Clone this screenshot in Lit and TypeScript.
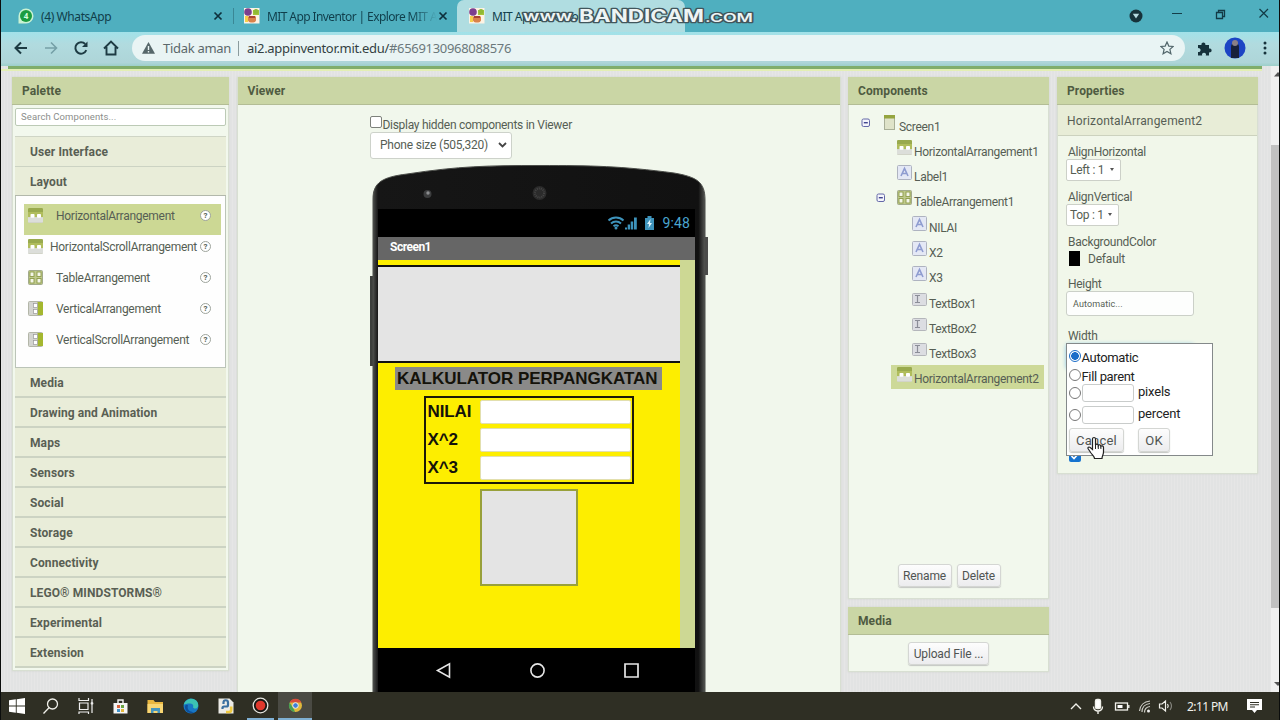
import { LitElement, html, css, svg, nothing } from "lit";
import { customElement, property } from "lit/decorators.js";
import { classMap } from "lit/directives/class-map.js";

const glyphs: Record<string, any> = {
  horizontal: svg`<path d="M1 2.500h13a1 1 0 0 1 1 1V14a1 1 0 0 1-1 1H1a1 1 0 0 1-1-1V3.500z" fill="#d2d4c9"/><path d="M1 0h13l1 1v8H0V1z" fill="#b0bd5c"/><path d="M1 0h13l1 1v3H0V1z" fill="#99aa4e"/><path d="M0 9.500h15V14H0z" fill="#dcdeda"/><rect x="2.500" y="6" width="4" height="3.800" rx=".8" fill="#fff"/><rect x="9" y="6" width="4" height="3.800" rx=".8" fill="#fff"/>`,
  table: svg`<rect x=".5" y=".5" width="14" height="14" rx="1" fill="#bfc98d" stroke="#a2aa8c"/><g fill="#f4f6ea" stroke="#8d9c48" stroke-width=".9"><rect x="2" y="2" width="4" height="4.500"/><rect x="9" y="2" width="4" height="4.500"/><rect x="2" y="8.500" width="4" height="4.500"/><rect x="9" y="8.500" width="4" height="4.500"/></g>`,
  vertical: svg`<rect x=".5" y=".5" width="14" height="14" rx="1" fill="#d3d4cf" stroke="#b3b6a8"/><path d="M9.500 1H15v13H9.500z" fill="#a4b72f"/><rect x="5.500" y="2.500" width="4" height="4" fill="#fff" stroke="#999" stroke-width=".7"/><rect x="5.500" y="8.500" width="4" height="4" fill="#fff" stroke="#999" stroke-width=".7"/>`,
  label: svg`<rect x=".5" y=".5" width="14" height="14" rx="1" fill="#e4e8f5" stroke="#aeb3c0"/><path d="M4 11 7.500 3.500 11 11M5.300 8.500h4.400" fill="none" stroke="#8e9cd0" stroke-width="1.600"/>`,
  textbox: svg`<rect x=".5" y="1.500" width="14" height="12" rx="1" fill="#dcdde2" stroke="#b4b6bb"/><path d="M3 3.500h5M5.500 3.500v7M3 10.500h5" fill="none" stroke="#8c8e98" stroke-width="1.200"/>`,
  screen: svg`<rect x="2.500" y=".5" width="10" height="14" fill="#dfe3c9" stroke="#a9af97"/><path d="M2 0h11v3.500H2z" fill="#95a53f"/>`,
};

const sprite = (name: string) => html`<svg class="sprite" width="15" height="15" viewBox="0 0 15 15">${glyphs[name]}</svg>`;

const inventorLogo = html`<svg width="16" height="16" viewBox="0 0 16 16"><path d="M0 0h15.500v15.500H0z" fill="#fdf3e4"/><circle cx="4" cy="4" r="3.800" fill="#7c3f8e"/><path d="M9 2h6v5H9z" fill="#a3c53a"/><circle cx="12" cy="3.500" r="2.500" fill="#8fb935"/><path d="M1 8h3v6H1z" fill="#f6cf4a"/><path d="M4 8.500h8v4a3 3 0 0 1-3 2H7a3 3 0 0 1-3-2z" fill="#d9824a"/><path d="M5 8h6v2H5z" fill="#a94433"/></svg>`;

@customElement("browser-chrome")
export class BrowserChrome extends LitElement {
  static styles = css`
    :host { display: block; font-family: "Noto Sans", "Open Sans", sans-serif; }
    .tabs { height: 32px; background: #4fafbf; display: flex; align-items: center; font-size: 12px; color: #103e4b; }
    .tab { display: flex; align-items: center; height: 32px; box-sizing: border-box; white-space: nowrap; }
    .tab svg { flex: none; }
    .wa { width: 232px; padding: 0 9px 0 17px; }
    .wa span { flex: 1; margin-left: 7px; letter-spacing: -.4px; }
    .sep { width: 1px; height: 16px; background: #3a8795; }
    .second { width: 223px; padding: 0 8px 0 10px; }
    .second span { margin: 0 auto 0 7px; letter-spacing: -.6px; mask-image: linear-gradient(90deg, #000 85%, transparent); }
    .active { width: 228px; background: #b0dde1; border-radius: 7px 7px 0 0; padding-left: 12px; }
    .active span { margin-left: 7px; letter-spacing: -.5px; }
    .winctl { margin-left: auto; display: flex; align-items: center; padding-right: 9px; }
    .bar { height: 34px; box-sizing: border-box; display: flex; align-items: center; background: linear-gradient(#a1e2e9, #b1dbdf 35%, #aed5d8 90%, #9ccfc9); padding: 0 7px 2px 11px; }
    .nav { width: 121px; display: flex; gap: 12px; align-items: center; }
    .nav svg { width: 18px; height: 18px; }
    .omni { width: 1053px; height: 26px; border-radius: 13px; background: #e9f4f4; display: flex; align-items: center; padding: 0 11px 0 10px; box-sizing: border-box; font-size: 13px; color: #333f42; margin-left: -1px; white-space: nowrap; }
    .warn { margin-left: 8px; width: 68px; color: #5b686b; letter-spacing: -.3px; }
    .rule { width: 1px; height: 15px; background: #8b9b9d; margin: 0 8px 0 7px; }
    .path { color: #6b787b; }
    .url { letter-spacing: -.31px; }
    .star { margin-left: auto; }
    .tools { display: flex; align-items: center; margin-left: 12px; gap: 12px; }
  `;
  render() {
    const close = html`<svg width="12" height="12" viewBox="0 0 12 12"><path d="M2.500 2.500l7 7m0-7l-7 7" stroke="#0d303c" stroke-width="1.700"/></svg>`;
    return html`
      <div class="tabs">
        <div class="tab wa">
          <svg width="16" height="16" viewBox="0 0 16 16"><path d="M.5 15.500V8A7.500 7.500 0 1 1 8 15.500z" fill="#c9f2d4"/><circle cx="8" cy="8" r="6" fill="#1c9c41"/><text x="8" y="11" text-anchor="middle" font-size="8" font-weight="700" fill="#d5ffe0">4</text></svg>
          <span>(4) WhatsApp</span>${close}
        </div>
        <div class="sep"></div>
        <div class="tab second">${inventorLogo}<span>MIT App Inventor | Explore MIT A</span>${close}</div>
        <div class="tab active">${inventorLogo}<span>MIT App Inventor</span></div>
        <div class="winctl">
          <svg width="142" height="20" viewBox="0 0 142 20"><circle cx="8" cy="10" r="6.500" fill="#17323a"/><path d="M4.800 7.800h6.400L8 12.500z" fill="#b6d9df"/><path d="M44 7.500h10" stroke="#143e49"/><path d="M88.500 6.500h6v6h-6zM90.500 6.500v-2h6v6h-2" fill="none" stroke="#123a45" stroke-width="1.300"/><path d="M131.500 3l8.500 8.500m0-8.500l-8.500 8.500" stroke="#123a45" stroke-width="1.200"/></svg>
        </div>
      </div>
      <div class="bar">
        <div class="nav">
          <svg viewBox="0 0 18 18" fill="none" stroke="#1d3b43" stroke-width="2"><path d="M15 9H3.500M9 3.500 3.500 9 9 14.500"/></svg>
          <svg viewBox="0 0 18 18" fill="none" stroke="#75a0a7" stroke-width="1.600"><path d="M3 9h11.500M9 3.500l5.500 5.500L9 14.500"/></svg>
          <svg viewBox="0 0 18 18"><path d="M14.300 11.200A5.700 5.700 0 1 1 13.200 5" fill="none" stroke="#1d3b43" stroke-width="2"/><path d="M15.500 2.500V8H10z" fill="#1d3b43"/></svg>
          <svg viewBox="0 0 18 18"><path d="M2 9.500 9 2.500l7 7M4.500 8v7.500h9V8" fill="none" stroke="#1d3b43" stroke-width="1.900"/></svg>
        </div>
        <div class="omni">
          <svg width="13" height="12" viewBox="0 0 13 12"><path d="M6.500 0 13 11.800H0z" fill="#56676a"/><path d="M6.500 4v4M6.500 9v1.500" stroke="#e9f4f4" stroke-width="1.400"/></svg>
          <span class="warn">Tidak aman</span><span class="rule"></span>
          <span class="url">ai2.appinventor.mit.edu/<span class="path">#6569130968088576</span></span>
          <svg class="star" width="14" height="14" viewBox="0 0 14 14"><path d="M7 1l1.800 4.100 4.400.4-3.300 2.900 1 4.400L7 10.500l-3.900 2.300 1-4.400L.8 5.500l4.400-.4z" fill="none" stroke="#52666b" stroke-width="1.200"/></svg>
        </div>
        <div class="tools">
          <svg width="15" height="15" viewBox="0 0 15 15"><path d="M1 4h3.500a2 2 0 1 1 3.800 0H12v3.500a2 2 0 1 1 0 3.800V14.500H8.800a2 2 0 1 0-3.600 0H1V11a2 2 0 1 0 0-3.800z" fill="#16323b"/></svg>
          <svg width="22" height="22" viewBox="0 0 22 22"><circle cx="11" cy="11" r="10.500" fill="#1c44c4"/><path d="M7 21V10a4 4 0 0 1 8 0v11z" fill="#17203a"/><circle cx="11" cy="6" r="3" fill="#8a7f86"/></svg>
          <svg width="14" height="16" viewBox="0 0 14 16" fill="#16323b"><circle cx="7" cy="3" r="1.500"/><circle cx="7" cy="8" r="1.500"/><circle cx="7" cy="13" r="1.500"/></svg>
        </div>
      </div>`;
  }
}

const panelStyles = css`
  :host { display: block; font-family: Roboto, sans-serif; font-size: 12px; color: #565e54; white-space: nowrap; }
  .panel { background: #f2f8ed; box-sizing: border-box; border: 1px solid #d8dfd2; border-top: 0; box-shadow: 0 0 2px #cfd3cd; }
  .head { height: 28px; line-height: 28px; box-sizing: border-box; margin: 0 -1px; background: #cad6a5; border-bottom: 1px solid #b3bd95; padding-left: 10px; font-weight: 700; font-size: 12px; letter-spacing: .1px; color: #4f5b41; }
  .btn { display: inline-flex; align-items: center; justify-content: center; box-sizing: border-box; background: linear-gradient(#fdfdfd, #ececee); border: 1px solid #d4d6d3; border-radius: 3px; box-shadow: 0 1px 1px #c4c6c3; color: #505452; }
  .sprite { flex: none; display: block; }
`;

@customElement("palette-panel")
export class PalettePanel extends LitElement {
  static styles = [panelStyles, css`
    .panel { width: 217px; height: 594px; padding: 0; }
    .search { margin: 3px 2px 10px; height: 18px; line-height: 16px; box-sizing: border-box; background: #fff; border: 1px solid #bccab6; border-radius: 2px; padding-left: 5px; font-size: 9.500px; color: #8b8e8b; letter-spacing: .1px; }
    .stack { margin: 0 2px; border-top: 1px solid #cfd5c6; }
    .cat { height: 30px; line-height: 30px; box-sizing: border-box; background: #e9edd9; border-bottom: 2px solid #ccd3c3; padding-left: 15px; font-weight: 700; font-size: 12px; letter-spacing: .1px; color: #595f54; }
    .cat.top { line-height: 31px; border-bottom-width: 1px; }
    .cat.open { border-bottom: 1px solid #b2b8ab; height: 29px; line-height: 31px; }
    .items { height: 172px; box-sizing: border-box; padding: 8px 4px 0 8px; background: #fefefe; border: 1px solid #bbc4b8; border-top: 0; }
    .item { height: 30.900px; box-sizing: border-box; padding: 0 10px 7px 4px; display: flex; align-items: center; letter-spacing: -.28px; }
    .item .name { flex: 1; text-align: left; padding: 0 0 0 13px; }
    .item.wide .name { padding-left: 7px; }
    .picked { background: #ccd894; }
    .q { width: 9px; height: 9px; border: 1px solid #9ea49c; border-radius: 50%; background: #fff; font-size: 8px; font-weight: 700; line-height: 9px; text-align: center; letter-spacing: 0; }
  `];
  items = [["HorizontalArrangement", "horizontal"], ["HorizontalScrollArrangement", "horizontal"], ["TableArrangement", "table"], ["VerticalArrangement", "vertical"], ["VerticalScrollArrangement", "vertical"]];
  rest = ["Media", "Drawing and Animation", "Maps", "Sensors", "Social", "Storage", "Connectivity", "LEGO® MINDSTORMS®", "Experimental", "Extension"];
  render() {
    return html`<div class="panel">
      <div class="head">Palette</div>
      <div class="search">Search Components...</div>
      <div class="stack">
        <div class="cat top">User Interface</div>
        <div class="cat open">Layout</div>
        <div class="items">${this.items.map(([n, g], i) => html`
          <div class=${classMap({ item: true, picked: i === 0, wide: i === 1 })}>${sprite(g)}<span class="name">${n}</span><span class="q">?</span></div>`)}</div>
        ${this.rest.map((n) => html`<div class="cat">${n}</div>`)}
      </div>
    </div>`;
  }
}

@customElement("phone-mock")
export class PhoneMock extends LitElement {
  static styles = css`
    :host { display: block; }
    .phone { display: grid; width: 340px; height: 528px; overflow: hidden; }
    .phone > * { grid-area: 1 / 1; }
    .face { width: 317px; margin: 44px 0 0 9px; display: flex; flex-direction: column; z-index: 1; }
    .status { height: 28px; background: #000; display: flex; align-items: center; justify-content: flex-end; padding-right: 5px; color: #4ba6d0; font: 14px/30px "Roboto", sans-serif; letter-spacing: .15px; gap: 5px; }
    .title { height: 23px; background: #666; color: #fff; font: 700 12px/21px "Roboto", sans-serif; letter-spacing: -.5px; padding-left: 12px; }
    .body { display: flex; height: 388px; }
    .canvas { width: 302px; background: #fdee00; display: flex; flex-direction: column; align-items: center; padding-top: 5px; box-sizing: border-box; font-family: "Liberation Sans", Arial, sans-serif; font-weight: 700; color: #14120a; }
    .gutter { flex: 1; background: #cdd894; }
    .harr { width: 302px; height: 98px; box-sizing: border-box; background: #e4e4e4; border: solid #111; border-width: 2px 0; }
    .caption { width: 267px; height: 23px; margin: 4px 1px 0 0; background: #8a8a89; line-height: 24px; font-size: 17px; box-sizing: border-box; padding-left: 2px; letter-spacing: -.02px; }
    .table { width: 210px; height: 88px; box-sizing: border-box; border: 2px solid #1c1908; margin: 6px 1px 0 0; display: grid; grid-template: repeat(3, 28px) / 53px 151px; padding-left: 1px; font-size: 17px; align-items: center; }
    .table span { padding-left: 1px; white-space: nowrap; letter-spacing: -.1px; }
    .field { height: 24px; background: #fff; border: 1px solid #e2dfae; border-radius: 2px; box-sizing: border-box; }
    .square { width: 98px; height: 97px; box-sizing: border-box; margin-top: 5px; background: #e4e4e4; border: 2px solid #98a03a; }
    .keys { height: 45px; background: #000; display: flex; align-items: center; justify-content: center; gap: 77px; padding-left: 1px; }
  `;
  render() {
    return html`<div class="phone">
      <svg width="340" height="528" viewBox="0 0 340 528">
        <defs><linearGradient id="rim" x1="0" x2="1"><stop offset="0" stop-color="#4c4e4b"/><stop offset=".015" stop-color="#161616"/><stop offset=".98" stop-color="#111"/><stop offset="1" stop-color="#555753"/></linearGradient></defs>
        <path d="M1 111h5v90H1z" fill="#3c3f3c"/><path d="M334 72h5v38h-5z" fill="#4a4b49"/>
        <path d="M4 528V34C4 17 14 12 38 9 90 1 120 .5 171 .5S252 1 305 8c23 4 31 9 31 27v493z" fill="url(#rim)" stroke="#4b4d49" stroke-width="1"/>
        <circle cx="58.500" cy="29" r="4" fill="#3c3d3e"/><circle cx="59" cy="28" r="1.700" fill="#8b8d8f"/><circle cx="170.500" cy="28" r="7" fill="#2b2b2b"/><circle cx="170.500" cy="28" r="4.500" fill="none" stroke="#444" stroke-width="2" stroke-dasharray="1 1"/>
      </svg>
      <div class="face">
        <div class="status">
          <svg width="50" height="18" viewBox="0 0 50 18"><g fill="none" stroke="#3e93bb" stroke-width="2"><path d="M1.500 6.500a11 11 0 0 1 15 0M4 9.500a7.500 7.500 0 0 1 10 0M6.500 12.300a4 4 0 0 1 5 0"/></g><circle cx="9" cy="14" r="1.500" fill="#3e93bb"/><g fill="#3e93bb"><path d="M18 15.500v-2h2v2zM20.700 15.500v-5h2.300v5zM23.700 15.500V7.500h2.500v8zM27 15.500V3.500h2.800v12z"/><path d="M38 4h2.500V2h4v2H47v12h-9z"/></g><path d="M43.500 5 40 10h2l-.5 4 3.500-5h-2z" fill="#dff6ff"/></svg>
          <span>9:48</span>
        </div>
        <div class="title">Screen1</div>
        <div class="body">
          <div class="canvas">
            <div class="harr"></div>
            <div class="caption">KALKULATOR PERPANGKATAN</div>
            <div class="table">
              <span>NILAI</span><div class="field"></div>
              <span>X^2</span><div class="field"></div>
              <span>X^3</span><div class="field"></div>
            </div>
            <div class="square"></div>
          </div>
          <div class="gutter"></div>
        </div>
        <div class="keys">
          <svg width="17" height="17" viewBox="0 0 17 17"><path d="M14.500 1.800v13.400L2.500 8.500z" fill="none" stroke="#e6e6e6" stroke-width="1.600"/></svg>
          <svg width="17" height="17" viewBox="0 0 17 17"><circle cx="8.500" cy="8.500" r="6.600" fill="none" stroke="#e6e6e6" stroke-width="1.600"/></svg>
          <svg width="17" height="17" viewBox="0 0 17 17"><path d="M2 2h13v13H2z" fill="none" stroke="#e6e6e6" stroke-width="1.700"/></svg>
        </div>
      </div>
    </div>`;
  }
}

@customElement("viewer-panel")
export class ViewerPanel extends LitElement {
  static styles = [panelStyles, css`
    .panel { width: 604px; height: 615px; overflow: hidden; border-bottom: 0; background: #f1f7ec; }
    .head { padding-left: 10.500px; }
    .opts { padding: 10px 0 0 132px; }
    .check { display: flex; height: 17px; align-items: flex-start; line-height: 20px; letter-spacing: -.29px; }
    .check i { width: 12px; height: 12px; box-sizing: border-box; border: 1px solid #7d817b; border-radius: 2px; background: #fff; margin: 1px .5px 0 0; }
    .select { width: 142px; height: 27px; box-sizing: border-box; border: 1px solid #cdd2ca; border-radius: 3px; background: #fff; display: flex; align-items: center; justify-content: space-between; padding: 0 4px 1px 9px; letter-spacing: -.22px; }
    phone-mock { margin: 6px 0 0 131px; }
  `];
  render() {
    return html`<div class="panel">
      <div class="head">Viewer</div>
      <div class="opts">
        <div class="check"><i></i>Display hidden components in Viewer</div>
        <div class="select">Phone size (505,320)<svg width="9" height="6" viewBox="0 0 9 6"><path d="M1 1l3.500 3.500L8 1" fill="none" stroke="#444" stroke-width="1.800"/></svg></div>
      </div>
      <phone-mock></phone-mock>
    </div>`;
  }
}

type TreeNode = { name: string; kind: string; depth: number; fold?: boolean; picked?: boolean };

@customElement("components-panel")
export class ComponentsPanel extends LitElement {
  static styles = [panelStyles, css`
    .tree { width: 201px; height: 522px; display: flex; flex-direction: column; }
    .rows { padding-top: 7.500px; flex: 1; }
    .row { height: 25.300px; box-sizing: border-box; display: flex; align-items: flex-start; }
    .d0 { padding-left: 11.500px; }
    .d1 { padding-left: 32px; }
    .d2 { padding-left: 47px; }
    .fold { flex: none; width: 10px; padding-top: 5px; margin-right: 11.500px; }
    .d1 .fold { margin: 0 5.500px 0 -5.500px; }
    .hit { display: flex; height: 24px; box-sizing: border-box; padding: 2px 5px 0 6px; align-items: flex-start; }
    .hit span { line-height: 24px; margin-left: 2px; letter-spacing: -.3px; }
    .d0 .hit { padding-left: 0; }
    .picked { background: #cdd998; }
    .nofold { flex: none; width: 10px; }
    .acts { height: 34px; display: flex; justify-content: center; gap: 5px; padding-left: 1px; }
    .btn { height: 23px; font-size: 12px; letter-spacing: -.1px; }
    .rename { width: 54px; } .delete { width: 44px; } .upload { width: 81px; margin-top: 7px; letter-spacing: -.15px; }
    .media { width: 201px; height: 65px; margin-top: 8px; }
    .center { display: flex; justify-content: center; }
  `];
  nodes: TreeNode[] = [
    { name: "Screen1", kind: "screen", depth: 0, fold: true },
    { name: "HorizontalArrangement1", kind: "horizontal", depth: 1 },
    { name: "Label1", kind: "label", depth: 1 },
    { name: "TableArrangement1", kind: "table", depth: 1, fold: true },
    { name: "NILAI", kind: "label", depth: 2 },
    { name: "X2", kind: "label", depth: 2 },
    { name: "X3", kind: "label", depth: 2 },
    { name: "TextBox1", kind: "textbox", depth: 2 },
    { name: "TextBox2", kind: "textbox", depth: 2 },
    { name: "TextBox3", kind: "textbox", depth: 2 },
    { name: "HorizontalArrangement2", kind: "horizontal", depth: 1, picked: true },
  ];
  render() {
    return html`
      <div class="panel tree">
        <div class="head">Components</div>
        <div class="rows">${this.nodes.map((n) => html`
          <div class="row d${n.depth}">
            ${n.fold
              ? html`<svg class="fold" width="10" height="10" viewBox="0 0 10 10"><rect x="1" y="1" width="7.500" height="7.500" rx="1.500" fill="#f4f5fb" stroke="#6468a8"/><path d="M2.800 4.750h4" stroke="#22267c" stroke-width="1.200"/></svg>`
              : n.depth ? html`<span class="nofold"></span>` : nothing}
            <div class=${classMap({ hit: true, picked: !!n.picked })}>${sprite(n.kind)}<span>${n.name}</span></div>
          </div>`)}</div>
        <div class="acts"><span class="btn rename">Rename</span><span class="btn delete">Delete</span></div>
      </div>
      <div class="panel media">
        <div class="head">Media</div>
        <div class="center"><span class="btn upload">Upload File ...</span></div>
      </div>`;
  }
}

@customElement("size-popup")
export class SizePopup extends LitElement {
  static styles = [panelStyles, css`
    :host { font-size: 13px; color: #222; letter-spacing: -.35px; }
    .pop { width: 147px; height: 113px; box-sizing: border-box; border: 1px solid #84898a; background: #fff; padding: 4px 0 0 2px; }
    .line { display: flex; align-items: center; height: 19px; }
    .line.box { height: 22px; }
    .line.first { margin-top: -4px; }
    .dot { width: 12px; height: 12px; box-sizing: border-box; border: 1px solid #777; border-radius: 50%; background: #fff; flex: none; margin-right: .500px; }
    .on { border: 1.500px solid #1b6dc9; background: radial-gradient(#1b6dc9 50%, #fff 58%); }
    .num { width: 52px; height: 18px; box-sizing: border-box; border: 1px solid #c9cccb; border-radius: 3px; margin-right: 4.500px; }
    .unit { margin-top: -4px; letter-spacing: -.2px; }
    .lift { margin-top: -3px; }
    .btns { display: flex; gap: 14px; margin-top: 2px; }
    .btn { height: 24px; letter-spacing: .2px; }
    .cancel { width: 55px; } .ok { width: 32px; }
  `];
  render() {
    return html`<div class="pop">
      <div class="line"><i class="dot on lift"></i><span>Automatic</span></div>
      <div class="line"><i class="dot lift"></i><span>Fill parent</span></div>
      <div class="line box first"><i class="dot"></i><i class="num"></i><span class="unit">pixels</span></div>
      <div class="line box"><i class="dot"></i><i class="num"></i><span class="unit">percent</span></div>
      <div class="btns"><span class="btn cancel">Cancel</span><span class="btn ok">OK</span></div>
    </div>`;
  }
}

@customElement("properties-panel")
export class PropertiesPanel extends LitElement {
  static styles = [panelStyles, css`
    .panel { width: 201px; height: 397px; background: #f1f7ea; }
    .sub { height: 31px; line-height: 32px; box-sizing: border-box; background: #e8edd7; border-bottom: 1px solid #ccd2be; padding-left: 9px; letter-spacing: .18px; }
    .list { padding: 7px 0 0 8px; position: relative; }
    .lab { height: 16px; line-height: 18px; padding-left: 2px; letter-spacing: -.28px; }
    .lab.near { line-height: 16px; }
    .sel { display: flex; align-items: center; justify-content: space-between; box-sizing: border-box; width: 55px; height: 22px; background: #fff; border: 1px solid #ccd0c8; border-radius: 2px; padding: 0 6px 1px 3px; margin-bottom: 7px; letter-spacing: -.3px; }
    .sel.v { width: 53px; }
    .arrow { width: 0; border: 2px solid transparent; border-top: 3px solid #555; border-bottom: 0; }
    .color { display: flex; height: 18px; gap: 8px; align-items: center; padding-left: 3px; margin-bottom: 8px; letter-spacing: -.2px; }
    .color span { padding-top: 1px; }
    .sw { width: 11px; height: 15px; background: #000; }
    .inp { width: 128px; height: 25px; line-height: 24px; box-sizing: border-box; border: 1px solid #cbd0c8; border-radius: 3px; background: #fdfefd; padding-left: 6px; font-size: 9px; letter-spacing: .1px; margin-bottom: 12px; }
    .glow { border-color: #8cc6e4; box-shadow: 0 0 4px #8cc6e4; }
    .tick { display: block; margin: 81px 0 0 3px; }
    size-popup { position: absolute; left: 8px; top: 207px; }
  `];
  render() {
    const arrow = html`<i class="arrow"></i>`;
    return html`<div class="panel">
      <div class="head">Properties</div>
      <div class="sub">HorizontalArrangement2</div>
      <div class="list">
        <div class="lab">AlignHorizontal</div><div class="sel">Left : 1${arrow}</div>
        <div class="lab">AlignVertical</div><div class="sel v">Top : 1${arrow}</div>
        <div class="lab">BackgroundColor</div><div class="color"><i class="sw"></i><span>Default</span></div>
        <div class="lab">Height</div><div class="inp">Automatic...</div>
        <div class="lab near">Width</div><div class="inp glow"></div>
        <svg class="tick" width="12" height="12" viewBox="0 0 12 12"><rect width="12" height="12" rx="2" fill="#1673cf"/><path d="M2.500 6l2.500 2.500L9.500 3.500" fill="none" stroke="#fff" stroke-width="1.700"/></svg>
        <size-popup></size-popup>
      </div>
    </div>`;
  }
}

@customElement("task-bar")
export class TaskBar extends LitElement {
  static styles = css`
    :host { display: block; }
    .bar { height: 28px; background: #2f2f24; display: flex; align-items: center; font: 12px "Noto Sans", sans-serif; color: #f1f1ec; }
    .app { width: 35px; height: 28px; display: flex; align-items: center; justify-content: center; box-sizing: border-box; }
    .start { width: 32px; }
    .run { width: 27px; margin: 0 4px; border-bottom: 2px solid #7fb0d4; }
    .cur { width: 34px; margin: 0; background: #4a4a43; }
    .tray { margin-left: auto; display: flex; align-items: center; }
    .clock { width: 40px; margin: 0 20px 0 12px; letter-spacing: -.6px; white-space: nowrap; }
    .note { margin-right: 17px; }
  `;
  render() {
    return html`<div class="bar">
      <span class="app start"><svg width="16" height="16" viewBox="0 0 16 16" fill="#fff"><path d="M0 2.300 6.800 1.300v6.200H0zM7.700 1.200 16 0v7.500H7.700zM0 8.400h6.800v6.300L0 13.700zM7.700 8.400H16V16l-8.300-1.200z"/></svg></span>
      <span class="app"><svg width="17" height="17" viewBox="0 0 17 17" fill="none" stroke="#f0f0ea" stroke-width="1.300"><circle cx="10.500" cy="6" r="5"/><path d="M7 9.700 1.500 15.500"/></svg></span>
      <span class="app"><svg width="16" height="16" viewBox="0 0 16 16" fill="none" stroke="#eee" stroke-width="1.200"><path d="M1.500 5h8.500v6.500H1.500zM1 0v2.500h9.500V0M1 16v-2h9.500v2M14 1v3M14 7v8"/><circle cx="14" cy="5.500" r=".8" fill="#fff"/></svg></span>
      <span class="app"><svg width="15" height="16" viewBox="0 0 15 16"><path d="M.5 5h14v10.500H.5z" fill="#f5f5f5"/><path d="M5 5V2h5v3" fill="none" stroke="#f5f5f5" stroke-width="1.400"/><path d="M4 7h3v3H4z" fill="#d8633e"/><path d="M8 7h3v3H8z" fill="#6aa442"/><path d="M4 11h3v3H4z" fill="#4093cb"/><path d="M8 11h3v3H8z" fill="#e5b83c"/></svg></span>
      <span class="app"><svg width="17" height="15" viewBox="0 0 17 15"><path d="M.5 1h6l1.500 2h8v11H.5z" fill="#e9b740"/><path d="M.5 5h15.500v9H.5z" fill="#f8d673"/><path d="M4 9h9v5h-2.500v-2h-4v2H4z" fill="#4796bd"/></svg></span>
      <span class="app"><svg width="16" height="16" viewBox="0 0 16 16"><circle cx="8" cy="8" r="7.500" fill="#1877c4"/><path d="M.7 7C2 1.500 8-.8 12.500 2c3 2 3.500 6 1.500 8-1.500 1-4 .5-4-1 .8-1 0-3.500-3-3.500C4 5.500 1.500 6 .7 7z" fill="#3cc2b2"/><path d="M5 7.500c-1.500 4 2 7 6.500 6.500-5 2.500-9.500-.5-9.500-5 0-2 2-3 3-1.500z" fill="#0d4f9a"/></svg></span>
      <span class="app"><svg width="16" height="16" viewBox="0 0 16 16"><path d="M.5.500h11l4 4V15.500H.5z" fill="#ecebe6"/><path d="M5.500 6V4.500a2.200 2.200 0 0 1 4.500 0V7a1.500 1.500 0 0 1-1.500 1.500H6A1.500 1.500 0 0 0 4.500 10v1" fill="none" stroke="#3a6fa0" stroke-width="2.200"/><path d="M8 14h3a2.200 2.200 0 0 0 2.200-2.200V8.500" fill="none" stroke="#eec93f" stroke-width="2.600"/></svg></span>
      <span class="app run"><svg width="17" height="17" viewBox="0 0 17 17"><circle cx="8.500" cy="8.500" r="7.300" fill="#181814" stroke="#e6e6e0" stroke-width="1.300"/><circle cx="8.500" cy="8.500" r="4.800" fill="#e0382c"/></svg></span>
      <span class="app run cur"><svg width="15" height="15" viewBox="0 0 15 15"><circle cx="7.500" cy="7.500" r="6.500" fill="#e0b83c"/><path d="M1.600 4.500A6.500 6.500 0 0 1 13.400 4.500H7.500z" fill="#d84b3c"/><path d="M1.600 4.500 6 11.500 7 14A6.500 6.500 0 0 1 1.600 4.500z" fill="#47a055"/><circle cx="7.500" cy="7.500" r="2.800" fill="#3f7fd6" stroke="#f0f0ee"/></svg></span>
      <div class="tray">
        <svg width="105" height="18" viewBox="0 0 105 18" fill="none" stroke="#f0f0ea" stroke-width="1.400"><path d="M1 12l5-5 5 5"/><rect x="25.500" y="2.500" width="5" height="9" rx="1.500" fill="#fff"/><path d="M23.500 9.500c0 6 9 6 9 0M28 14v3"/><rect x="45.500" y="6" width="12" height="7" stroke-width="1.300"/><path d="M47.500 8h5v3h-5z" fill="#fff" stroke="none"/><path d="M58.800 8v3"/><g stroke-width="1.200" stroke="#cfcfc8"><path d="M69.500 14C70 8.500 74 4.500 80 4M72 15c0-4.500 3-8 8-8.500M74.500 15.500c0-3 2-5.500 5.500-6"/></g><circle cx="78.500" cy="14" r="1.500" fill="#eee" stroke="none"/><path d="M89.500 7v4h2.500l3.500 3V4l-3.500 3zM97.500 7q1.500 2 0 4" stroke-width="1.200"/><path d="M100 5q3 4 0 8" stroke="#85857e" stroke-width="1.200"/></svg>
        <span class="clock">2:11 PM</span>
        <svg class="note" width="15" height="16" viewBox="0 0 15 16"><path d="M0 1h15v11H10l-2.500 3-2.500-3H0z" fill="#fff"/><path d="M3 4.500h9M3 6.800h9M3 9h5" stroke="#2f2f24" stroke-width="1.100"/></svg>
      </div>
    </div>`;
  }
}

@customElement("app-root")
export class AppRoot extends LitElement {
  @property() watermark = "BANDICAM";
  static styles = css`
    :host { display: block; width: 1280px; height: 720px; overflow: hidden; position: relative; }
    .frame { height: 720px; box-sizing: border-box; border: solid #0b0d0c; border-width: 0 1px; display: flex; flex-direction: column; background: #e4e5e4; }
    .page { flex: 1; min-height: 0; display: flex; background: repeating-linear-gradient(90deg, #e6e6e6 0 1px, #e2e3e3 1px 3px); }
    .content { flex: 1; }
    .strip { height: 3px; background: #80ad6a; margin: 0 9px 0 7px; }
    .strip2 { height: 2px; background: #e3efb4; margin-right: 9px; }
    .cols { display: flex; padding: 6px 0 0 11px; align-items: flex-start; }
    .cols viewer-panel { margin-left: 8px; }
    .cols components-panel { margin-left: 7px; }
    .cols properties-panel { margin-left: 8px; }
    .scroll { width: 8px; display: flex; flex-direction: column; background: #f0f0f0; }
    .up { height: 79px; }
    .thumb { height: 463px; background: #c1c1c1; }
    .scroll svg { display: block; margin-top: 5px; }
    .mark { position: absolute; left: 518px; top: 2px; }
    .hand { position: absolute; left: 1087px; top: 436px; }
  `;
  render() {
    return html`
      <div class="frame">
        <browser-chrome></browser-chrome>
        <div class="page">
          <div class="content">
            <div class="strip"></div><div class="strip2"></div>
            <div class="cols">
              <palette-panel></palette-panel><viewer-panel></viewer-panel>
              <components-panel></components-panel><properties-panel></properties-panel>
            </div>
          </div>
          <div class="scroll">
            <div class="up"><svg width="8" height="6" viewBox="0 0 8 6"><path d="M3 5.500 7 1l1 1v3.500z" fill="#555"/></svg></div>
            <div class="thumb"></div>
            <svg width="8" height="77" viewBox="0 0 8 77"><path d="M3 69h5v3l-1 1z" fill="#555"/></svg>
          </div>
        </div>
        <task-bar></task-bar>
      </div>
      <svg class="mark" width="242" height="28" viewBox="0 0 242 28" font-family="Inter, sans-serif" font-weight="700" fill="#eef4f4" stroke="#41565c" stroke-width="2.600" paint-order="stroke" stroke-linejoin="round">
        <text x="5" y="19" font-size="14" font-weight="600" textLength="54" lengthAdjust="spacingAndGlyphs">www.</text>
        <text x="61" y="20" font-size="17.500" textLength="125" lengthAdjust="spacingAndGlyphs">${this.watermark}</text>
        <text x="187" y="20" font-size="12" font-weight="600" textLength="48" lengthAdjust="spacingAndGlyphs">.COM</text>
      </svg>
      <svg class="hand" width="18" height="24" viewBox="0 0 18 24"><path d="M5.500 13.500V3.200c0-2.300 3-2.300 3 0V9c.5-1.500 2.700-1.200 2.800.5.6-1.200 2.500-.9 2.600.8.700-1 2.600-.6 2.600 1.200v4.500c0 3-1.500 4-1.500 6.500H7.500c0-2-2-3.500-3.500-5.500l-2.700-4c-1-1.600.6-2.600 1.900-1.500z" fill="#fff" stroke="#222" stroke-width="1.200"/><path d="M8.500 9v4M11.300 9.500V13M13.900 10.300V13" stroke="#222"/></svg>`;
  }
}
